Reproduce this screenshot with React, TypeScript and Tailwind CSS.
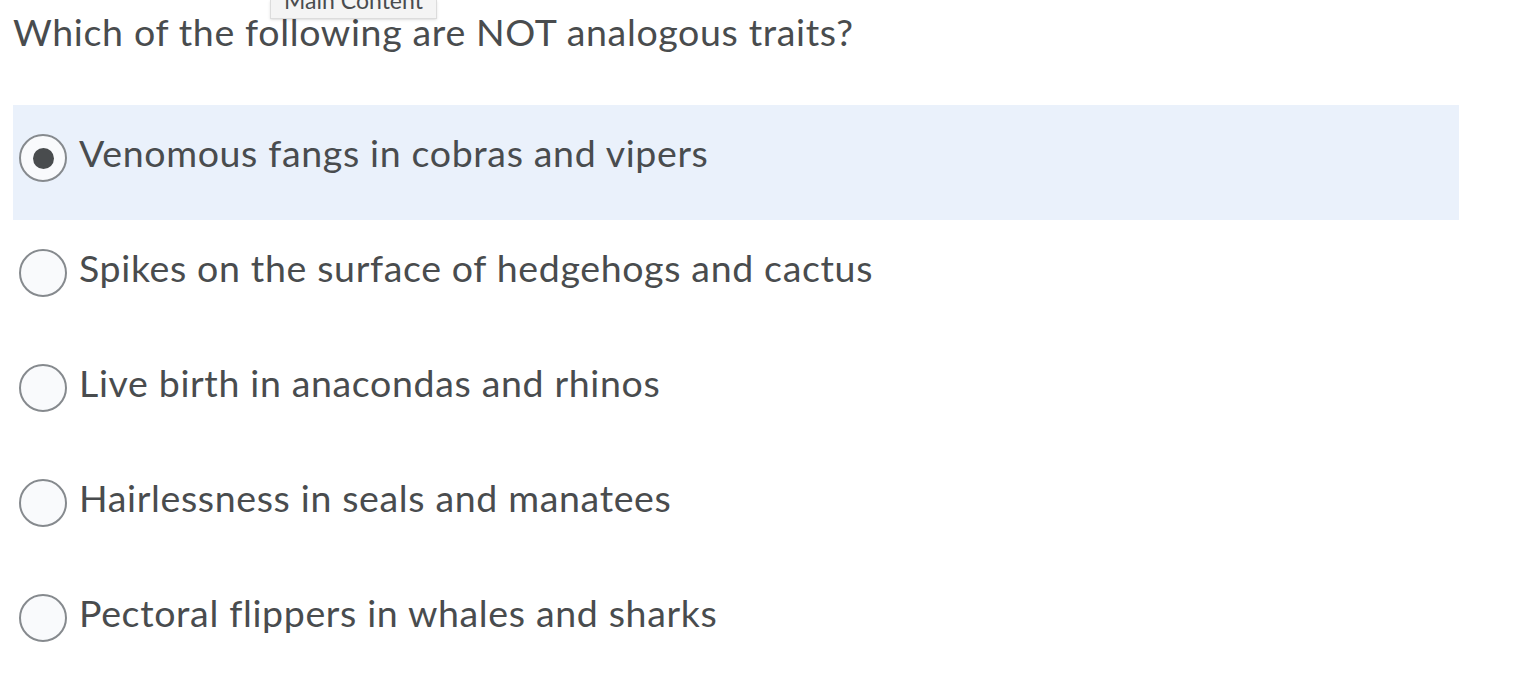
import React from "react";

const options = [
  "Venomous fangs in cobras and vipers",
  "Spikes on the surface of hedgehogs and cactus",
  "Live birth in anacondas and rhinos",
  "Hairlessness in seals and manatees",
  "Pectoral flippers in whales and sharks",
];

const Radio: React.FC<{ checked: boolean }> = ({ checked }) => (
  <span className="mt-[29px] flex h-[48px] w-[48px] shrink-0 items-center justify-center rounded-full border-2 border-[#868a8e] bg-[#f9fafc]">
    {checked && <span className="h-[21px] w-[21px] rounded-full bg-[#494c4e]" />}
  </span>
);

export default function App() {
  const selected = 0;
  return (
    <div className="relative min-h-[680px] w-[1530px] bg-white font-['Lato',sans-serif] text-[#494c4e]">
      {/* skip link, mostly scrolled out of view */}
      <div className="absolute left-[270px] top-0 h-[19px] w-[167px] overflow-hidden border border-t-0 border-[#dcdcdc] bg-[#f4f4f4] text-center shadow-sm">
        <div className="mt-[-11px] text-[23px] leading-[23px] text-[#494c4e]">Main Content</div>
      </div>

      <h1 className="pl-[13px] pt-[10px] text-[37.5px] leading-[44px] tracking-[0.65px]">
        Which of the following are NOT analogous traits?
      </h1>

      <div className="ml-[13px] mt-[51px] w-[1446px]">
        {options.map((opt, i) => (
          <label
            key={opt}
            className={`flex h-[115px] items-start gap-[12px] pl-[6px] ${i === selected ? "bg-[#eaf1fb]" : ""}`}
          >
            <Radio checked={i === selected} />
            <span className="mt-[26px] text-[37.5px] leading-[44px] tracking-[0.65px]">{opt}</span>
          </label>
        ))}
      </div>
    </div>
  );
}
